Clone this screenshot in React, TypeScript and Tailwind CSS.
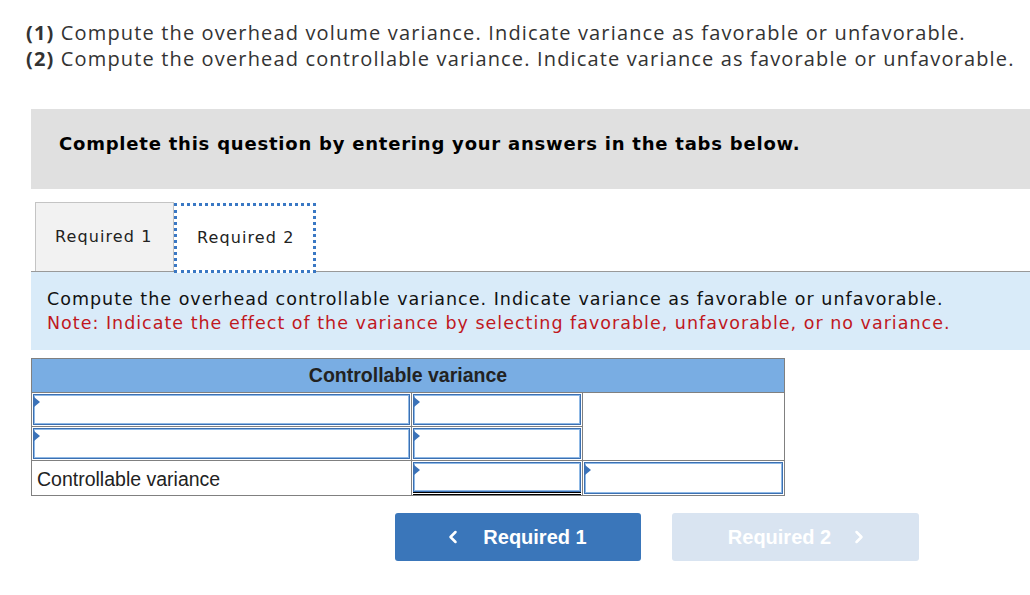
import { ChevronLeft, ChevronRight } from 'lucide-react';

function AnswerBox({ total = false }: { total?: boolean }) {
  return (
    <div className={total ? 'h-full border-b-[3px] border-double border-black' : 'h-full'}>
      <div className="relative h-full bg-white border border-[#3c70b2] shadow-[inset_0_0_0_1px_#8fb9e6]">
        <div className="absolute left-0 top-[2px] w-0 h-0 border-y-[5px] border-y-transparent border-l-[6px] border-l-[#3b72b8]" />
      </div>
    </div>
  );
}

export default function App() {
  return (
    <div className="w-[1030px] h-[595px] bg-white overflow-hidden">
      <div className="pl-[26px] pt-[20px] [font-family:Open_Sans,sans-serif] text-[20px] tracking-[1.15px] leading-[26px] text-[#333]">
        <p><b>(1)</b> Compute the overhead volume variance. Indicate variance as favorable or unfavorable.</p>
        <p><b>(2)</b> Compute the overhead controllable variance. Indicate variance as favorable or unfavorable.</p>
      </div>

      <div className="ml-[31px] mt-[37px] h-[80px] bg-[#e0e0e0] pl-[28px] pt-[21px] [font-family:DejaVu_Sans,sans-serif] font-bold text-[18px] tracking-[0.78px] text-black">
        Complete this question by entering your answers in the tabs below.
      </div>

      <div className="ml-[31px] mt-[12px] [font-family:DejaVu_Sans,sans-serif] text-[#222]">
        <div className="flex items-end h-[70px] pl-[4px] text-[16px] tracking-[1.1px]">
          <div className="h-[69px] w-[139px] bg-[#f2f2f2] border border-b-0 border-[#c4c4c4] flex items-center pl-[19px]">
            Required 1
          </div>
          <div className="h-[70px] w-[142px] bg-white border-[3px] border-dotted border-[#3a78c4] -mb-[2px] flex items-center pl-[20px]">
            Required 2
          </div>
        </div>
        <div className="h-[79px] bg-[#d9ebf9] border-t border-[#999] pl-[16px] pt-[15px] text-[17.5px] tracking-[1px] leading-[24px]">
          <p className="text-[#111]">Compute the overhead controllable variance. Indicate variance as favorable or unfavorable.</p>
          <p className="text-[#c0181e]">Note: Indicate the effect of the variance by selecting favorable, unfavorable, or no variance.</p>
        </div>
      </div>

      <div className="ml-[31px] mt-[8px] w-[754px] border border-[#808080] [font-family:Liberation_Sans,Arial,sans-serif]">
        <div className="h-[34px] bg-[#79ade3] border-b border-[#808080] flex items-center justify-center font-bold text-[19.5px] text-[#222]">
          Controllable variance
        </div>
        <div className="grid grid-cols-[380px_170px_1fr] grid-rows-[34px_34px_34px]">
          <div className="border-r border-b border-[#808080] p-px"><AnswerBox /></div>
          <div className="border-b border-[#808080] p-px"><AnswerBox /></div>
          <div className="row-span-2 border-l border-b border-[#808080]" />
          <div className="border-r border-b border-[#808080] p-px"><AnswerBox /></div>
          <div className="border-b border-[#808080] p-px"><AnswerBox /></div>
          <div className="border-r border-[#808080] flex items-center pl-[5px] pt-[3px] text-[19.5px] text-[#222]">
            Controllable variance
          </div>
          <div className="px-px pt-px"><AnswerBox total /></div>
          <div className="border-l border-[#808080] p-px"><AnswerBox /></div>
        </div>
      </div>

      <div className="flex gap-[31px] ml-[395px] mt-[17px] [font-family:Liberation_Sans,Arial,sans-serif] font-bold text-[20px] text-white">
        <button className="w-[246px] h-[48px] rounded-[3px] bg-[#3a76ba] flex items-center justify-center gap-[20px] pr-[6px]">
          <ChevronLeft className="w-[20px] h-[20px]" strokeWidth={3} />
          <span>Required 1</span>
        </button>
        <button className="w-[247px] h-[48px] rounded-[3px] bg-[#d9e4f1] flex items-center justify-center gap-[18px] pl-[6px]">
          <span>Required 2</span>
          <ChevronRight className="w-[20px] h-[20px]" strokeWidth={3} />
        </button>
      </div>
    </div>
  );
}
